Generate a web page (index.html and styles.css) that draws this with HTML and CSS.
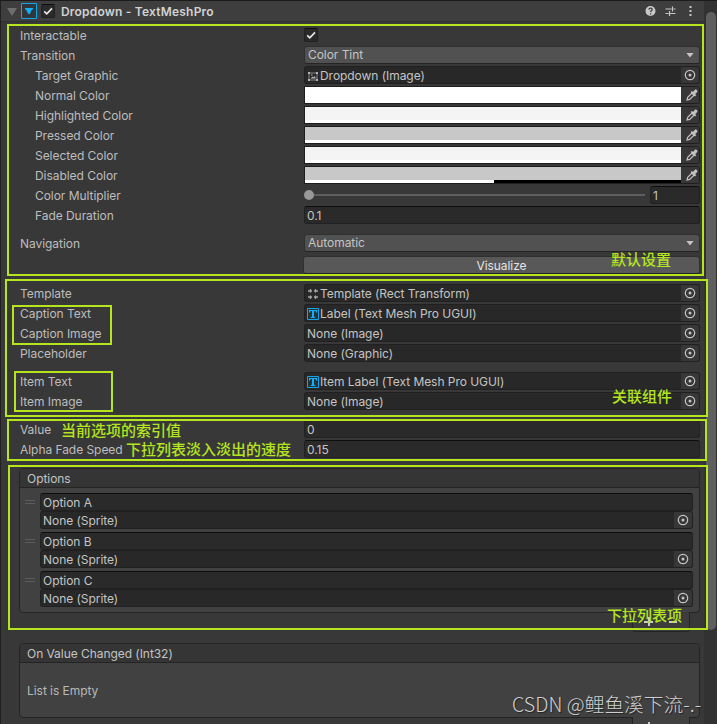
FILE: index.html
```html
<!DOCTYPE html>
<html lang="zh-CN">
<head>
<meta charset="utf-8">
<title>Inspector</title>
<link rel="stylesheet" href="styles.css">
</head>
<body>
<svg class="defs" width="0" height="0" aria-hidden="true">
  <symbol id="pick" viewBox="0 0 12 12"><circle cx="6" cy="6" r="4.700" fill="none" stroke="#c4c4c4" stroke-width="1.200"/><circle cx="6" cy="6" r="1.500" fill="#c4c4c4"/></symbol>
  <symbol id="dropper" viewBox="0 0 12 12"><path d="M1 11l.7-2.600 4.200-4.200 2 2-4.200 4.200z" fill="none" stroke="#c4c4c4" stroke-width="1.200"/><path d="M4.600 3l1.200-1.100 1.200 1 1.700-2C10-.4 12.400 1.800 11 3.300L9.200 5l1 1.200L9 7.400z" fill="#c4c4c4"/></symbol>
  <symbol id="check" viewBox="0 0 14 14"><path d="M3.200 7.300l2.600 2.500 5.200-5.400" fill="none" stroke="#e8e8e8" stroke-width="1.700"/></symbol>
  <symbol id="tmp" viewBox="0 0 12 12"><path d="M.5.5h11v11H.5z" fill="#26323a" stroke="#12a5e8"/><path d="M2 2h8v2.500h-1L8.500 3H7v5.800l1.200.3v.9H3.800v-.9L5 8.800V3H3.500L3 4.500H2z" fill="#12b0f5"/></symbol>
  <symbol id="rect" viewBox="0 0 10 10"><path d="M0 2h4M2.500 0v3.500M6 2h4M7.500 0v3.500M0 8h4M2.500 6.500V10M6 8h4M7.500 6.500V10" fill="none" stroke="#a4a4a4" stroke-width="1.300"/></symbol>
  <symbol id="image" viewBox="0 0 10 9"><path d="M1 1h8v7H1z" fill="none" stroke="#858585"/><path d="M0 0h2v2H0zM8 0h2v2H8zM0 7h2v2H0zM8 7h2v2H8zM2.500 6.500l2-2 1 .8L6.500 4 8 6.500zM3 2.500h1.500v1H3z" fill="#b4b4b4"/></symbol>
</svg>
<div class="window">
  <main class="inspector">
    <header class="title">
      <span class="tri fold"></span>
      <svg class="comp" viewBox="0 0 16 16"><path d="M.5.5h15v15H.5z" fill="#30373c" stroke="#12a5e8"/><path d="M4 5h8v1.500h-1L8.700 11H7.300L5 6.500H4z" fill="#12b0f5"/></svg>
      <span class="checkbox"><svg><use href="#check"/></svg></span>
      <h1>Dropdown - TextMeshPro</h1>
      <svg class="tools" viewBox="0 0 50 12"><circle cx="5.500" cy="6" r="5" fill="#c8c8c8"/><path d="M3.900 4.600c.1-2 3.300-2 3.300 0 0 1.100-1.600 1.200-1.600 2.400M5.600 8.200v1.200" fill="none" stroke="#3e3e3e" stroke-width="1.300"/><path d="M20.500 4h6M28.500 4h2M27.500 1.500v5M20.500 8.500h3M25 8.500h5.500M24.500 6v5" fill="none" stroke="#c8c8c8" stroke-width="1.200"/><path d="M44.500 1h2v2h-2zM44.500 5h2v2h-2zM44.500 9h2v2h-2z" fill="#c8c8c8"/></svg>
    </header>
    <section class="rows">
      <div class="row"><label>Interactable</label><span class="checkbox"><svg><use href="#check"/></svg></span></div>
      <div class="row"><label>Transition</label><div class="select">Color Tint<span class="tri"></span></div></div>
      <div class="row sub"><label>Target Graphic</label><div class="field obj"><svg class="ic im"><use href="#image"/></svg><span>Dropdown (Image)</span><i><svg><use href="#pick"/></svg></i></div></div>
      <div class="row sub"><label>Normal Color</label><div class="color white"><b></b><i><svg><use href="#dropper"/></svg></i></div></div>
      <div class="row sub"><label>Highlighted Color</label><div class="color light"><b></b><i><svg><use href="#dropper"/></svg></i></div></div>
      <div class="row sub"><label>Pressed Color</label><div class="color gray"><b></b><i><svg><use href="#dropper"/></svg></i></div></div>
      <div class="row sub"><label>Selected Color</label><div class="color light"><b></b><i><svg><use href="#dropper"/></svg></i></div></div>
      <div class="row sub"><label>Disabled Color</label><div class="color gray half"><b></b><i><svg><use href="#dropper"/></svg></i></div></div>
      <div class="row sub"><label>Color Multiplier</label><div class="slider"><span class="knob"></span><span class="line"></span></div><div class="field num">1</div></div>
      <div class="row sub"><label>Fade Duration</label><div class="field">0.1</div></div>
      <div class="row gap"><label>Navigation</label><div class="select">Automatic<span class="tri"></span></div></div>
      <div class="row vis"><label></label><div class="button">Visualize</div></div>
      <div class="row gap"><label>Template</label><div class="field obj"><svg class="ic re"><use href="#rect"/></svg><span>Template (Rect Transform)</span><i><svg><use href="#pick"/></svg></i></div></div>
      <div class="row"><label>Caption Text</label><div class="field obj"><svg class="ic t"><use href="#tmp"/></svg><span>Label (Text Mesh Pro UGUI)</span><i><svg><use href="#pick"/></svg></i></div></div>
      <div class="row"><label>Caption Image</label><div class="field obj"><span>None (Image)</span><i><svg><use href="#pick"/></svg></i></div></div>
      <div class="row"><label>Placeholder</label><div class="field obj"><span>None (Graphic)</span><i><svg><use href="#pick"/></svg></i></div></div>
      <div class="row gap"><label>Item Text</label><div class="field obj"><svg class="ic t"><use href="#tmp"/></svg><span>Item Label (Text Mesh Pro UGUI)</span><i><svg><use href="#pick"/></svg></i></div></div>
      <div class="row"><label>Item Image</label><div class="field obj"><span>None (Image)</span><i><svg><use href="#pick"/></svg></i></div></div>
      <div class="row gap"><label>Value</label><div class="field">0</div></div>
      <div class="row"><label>Alpha Fade Speed</label><div class="field">0.15</div></div>
    </section>
    <section class="list options">
      <h2>Options</h2>
      <div class="body">
        <div class="option"><span class="grip"></span><div class="pair"><div class="field">Option A</div><div class="field obj"><span>None (Sprite)</span><i><svg><use href="#pick"/></svg></i></div></div></div>
        <div class="option"><span class="grip"></span><div class="pair"><div class="field">Option B</div><div class="field obj"><span>None (Sprite)</span><i><svg><use href="#pick"/></svg></i></div></div></div>
        <div class="option"><span class="grip"></span><div class="pair"><div class="field">Option C</div><div class="field obj"><span>None (Sprite)</span><i><svg><use href="#pick"/></svg></i></div></div></div>
      </div>
    </section>
    <div class="tab"><span class="plus"></span><span class="minus"></span></div>
    <section class="list events">
      <h2>On Value Changed (Int32)</h2>
      <div class="body">List is Empty</div>
    </section>
    <div class="tab"><span class="plus"></span><span class="minus"></span></div>
  </main>
  <aside class="scroll"><div class="thumb"></div></aside>
  <div class="mark m1"></div><div class="mark m2"></div><div class="mark m3"></div><div class="mark m4"></div><div class="mark m5"></div><div class="mark m6"></div>
  <p class="note n1">默认设置</p>
  <p class="note n2">关联组件</p>
  <p class="note n3">当前选项的索引值</p>
  <p class="note n4">下拉列表淡入淡出的速度</p>
  <p class="note n5">下拉列表项</p>
  <p class="credit"><span>CSDN @</span>鲤鱼溪下流-.-</p>
</div>
</body>
</html>
```
FILE: styles.css
```css
* { box-sizing: border-box; }
body { margin: 0; background: #383838; color: #c4c4c4; font: 12px/18px Inter, "Noto Sans CJK SC", sans-serif; letter-spacing: -.05px; }
h1, h2, p { margin: 0; font-size: inherit; }
.defs { position: absolute; }
.window { position: relative; display: flex; width: 717px; height: 724px; overflow: hidden; border-left: 1px solid #202020; border-top: 1px solid #1b1b1b; }
.inspector { width: 703px; height: 723px; }
.title { display: flex; align-items: center; height: 21px; padding-left: 6px; background: #3e3e3e; border-bottom: 1px solid #303030; }
.title h1 { margin: 1px 0 0 6px; flex: 1; font-weight: 600; letter-spacing: .2px; color: #d2d2d2; }
.tri { width: 8px; height: 5px; background: #c4c4c4; clip-path: polygon(0 0, 100% 0, 50% 100%); }
.fold { width: 10px; height: 8px; margin-top: 2px; background: #6e6e6e; }
.comp { width: 16px; height: 16px; margin: 0 4px; }
.tools { width: 50px; height: 12px; margin-right: 9px; }
.checkbox { width: 14px; height: 14px; background: #2a2a2a; border: 1px solid #212121; border-top-color: #0d0d0d; border-radius: 2px; display: flex; }
.checkbox svg { width: 14px; height: 14px; margin: -1px; flex: none; }
.rows { padding: 4px 4px 0 19px; }
.row { display: flex; height: 18px; margin-bottom: 2px; }
.row label { width: 284px; flex: none; padding-top: 1px; color: #bdbdbd; }
.row > .checkbox { margin-top: 2px; }
.sub label { padding-left: 15px; }
.gap { margin-top: 10px; }
.rows .row.vis { margin-top: 4px; }
.row.vis label { width: 283px; flex: none; }
.row.vis + .gap { margin-top: 10px; }
.field { flex: 1; height: 18px; padding-left: 2px; background: #2a2a2a; border: 1px solid #212121; border-top-color: #0d0d0d; border-radius: 3px; line-height: 18px; }
.obj { display: flex; border-top-color: #202020; background: #282828; align-items: center; }
.obj span { flex: 1; padding-top: 2px; }
.obj i, .color i { width: 18px; height: 16px; flex: none; background: #373737; display: flex; align-items: center; justify-content: center; border-radius: 0 2px 2px 0; }
i svg { width: 12px; height: 12px; }
.color i svg { margin: -1px 0 0 3px; }
.ic { width: 10px; height: 9px; margin: 1px 1px 0 1px; }
.ic.t { width: 12px; height: 12px; margin: 2px 1px 0 0; }
.ic.im { margin: 2px 2px 0 1px; }
.ic.re { height: 10px; margin: 2px 2px 0 1px; }
.select { flex: 1; display: flex; align-items: center; justify-content: space-between; padding: 0 5px 0 3px; background: #515151; border: 1px solid #303030; border-bottom-color: #242424; border-radius: 3px; line-height: 16px; }
.button { flex: 1; background: #585858; border: 1px solid #303030; border-bottom-color: #242424; border-radius: 3px; text-align: center; line-height: 17px; color: #e4e4e4; }
.color { flex: 1; display: flex; border: 1px solid #1e1e1e; border-radius: 0 3px 3px 0; }
.color b { flex: 1; border-bottom: 3px solid #fff; background: #fff; }
.light b { background: #f4f4f4; }
.gray b { background: #c8c8c8; }
.half b { border: 0; background: linear-gradient(90deg, #fff 50.2%, #000 50.2%) bottom / 100% 3px no-repeat, #c8c8c8; }
.slider { flex: 1; display: flex; align-items: center; }
.knob { width: 10px; height: 10px; border-radius: 5px; background: #999; }
.line { height: 2px; flex: 1; background: #5e5e5e; margin-right: 5px; }
.num { flex: none; width: 50px; }
.list { margin-left: 18px; width: 681px; border: 1px solid #242424; border-radius: 4px; background: #414141; }
.list h2 { height: 19px; padding-left: 7px; background: #353535; border-bottom: 1px solid #242424; border-radius: 3px 3px 0 0; font-weight: 400; line-height: 20px; }
.options { margin-top: 10px; height: 145px; }
.options .body { padding: 5px 6px 0 5px; }
.option { display: flex; margin-bottom: 3px; }
.grip { width: 10px; height: 4px; margin: 7px 5px 0 0; border: solid #5b5b5b; border-width: 1px 0; }
.pair { flex: 1; }
.tab { display: flex; gap: 16px; width: 58px; height: 20px; margin: -1px 0 0 631px; padding: 5px 0 0 11px; background: #414141; border: solid #242424; border-width: 0 1px 1px; border-radius: 0 0 4px 4px; }
.options + .tab { background: #3c3c3c; }
.plus { width: 9px; height: 9px; background: linear-gradient(#ccc, #ccc) 4px 0 / 2px 100% no-repeat, linear-gradient(#ccc, #ccc) 0 4px / 100% 2px no-repeat; }
.minus { width: 8px; height: 2px; margin-top: 4px; background: #ccc; }
.events { margin-top: 11px; height: 75px; }
.events .body { padding: 19px 7px; color: #b8b8b8; }
.scroll { width: 13px; padding: 11px 1px 0 2px; background: #323232; }
.thumb { height: 618px; border-radius: 5px; background: #5f5f5f; }
.mark { position: absolute; border: 2px solid #b4e51e; }
.m1 { left: 6px; top: 23px; width: 697px; height: 252px; }
.m2 { left: 4px; top: 278px; width: 703px; height: 138px; }
.m3 { left: 11px; top: 304px; width: 100px; height: 40px; }
.m4 { left: 13px; top: 370px; width: 99px; height: 41px; }
.m5 { left: 6px; top: 418px; width: 700px; height: 42px; }
.m6 { left: 7px; top: 464px; width: 700px; height: 165px; }
.note { position: absolute; color: #b4e51e; font: 500 15px/20px "Noto Sans CJK SC", sans-serif; letter-spacing: 0; white-space: nowrap; }
.n1 { left: 610px; top: 248px; }
.n2 { left: 611px; top: 385px; }
.n3 { left: 60px; top: 419px; }
.n4 { left: 125px; top: 438px; }
.n5 { left: 606px; top: 604px; }
.credit { position: absolute; left: 511px; top: 689px; font: 300 19.7px/28px "Noto Sans CJK SC", sans-serif; letter-spacing: 0; color: #d0d0d0; text-shadow: 1px 1px 1px #222; white-space: nowrap; }
```
